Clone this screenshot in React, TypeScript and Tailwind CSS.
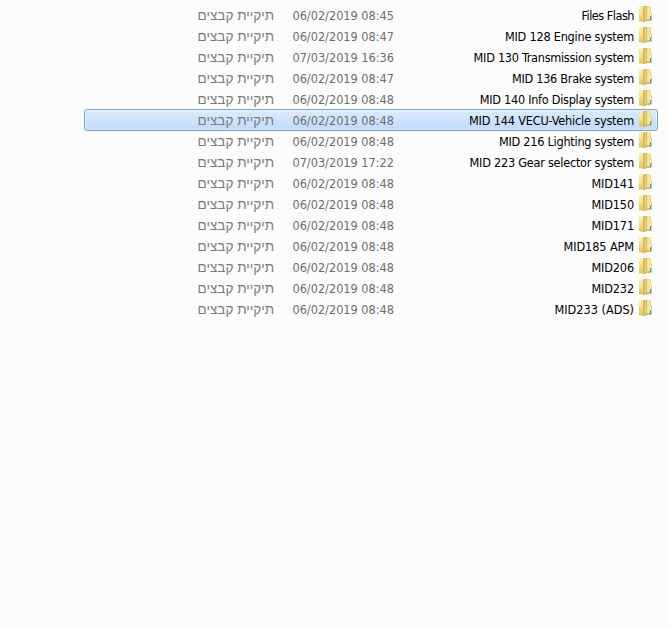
import clsx from 'clsx';

// tracking keeps each label at its natural Explorer width
type Folder = { name: string; date: string; tracking?: string };

const FOLDERS: Folder[] = [
  { name: 'Files Flash', date: '06/02/2019 08:45', tracking: 'tracking-[-0.5px]' },
  { name: 'MID 128 Engine system', date: '06/02/2019 08:47', tracking: 'tracking-[-0.24px]' },
  { name: 'MID 130 Transmission system', date: '07/03/2019 16:36', tracking: 'tracking-[-0.29px]' },
  { name: 'MID 136 Brake system', date: '06/02/2019 08:47', tracking: 'tracking-[-0.28px]' },
  { name: 'MID 140 Info Display system', date: '06/02/2019 08:48', tracking: 'tracking-[-0.29px]' },
  { name: 'MID 144 VECU-Vehicle system', date: '06/02/2019 08:48', tracking: 'tracking-[-0.19px]' },
  { name: 'MID 216 Lighting system', date: '06/02/2019 08:48', tracking: 'tracking-[-0.26px]' },
  { name: 'MID 223 Gear selector system', date: '07/03/2019 17:22', tracking: 'tracking-[-0.25px]' },
  { name: 'MID141', date: '06/02/2019 08:48', tracking: 'tracking-[-0.15px]' },
  { name: 'MID150', date: '06/02/2019 08:48', tracking: 'tracking-[-0.15px]' },
  { name: 'MID171', date: '06/02/2019 08:48', tracking: 'tracking-[-0.15px]' },
  { name: 'MID185 APM', date: '06/02/2019 08:48', tracking: 'tracking-[-0.1px]' },
  { name: 'MID206', date: '06/02/2019 08:48', tracking: 'tracking-[-0.15px]' },
  { name: 'MID232', date: '06/02/2019 08:48', tracking: 'tracking-[-0.15px]' },
  { name: 'MID233 (ADS)', date: '06/02/2019 08:48' },
];

const SELECTED = 5;

function FolderIcon() {
  return (
    <svg width="14" height="18" viewBox="0 0 14 18" className="shrink-0">
      <defs>
        <linearGradient id="folder-front" x1="0" y1="0" x2="0" y2="1">
          <stop offset="0" stopColor="#faf0b8" />
          <stop offset=".5" stopColor="#f2df8c" />
          <stop offset="1" stopColor="#dfc05c" />
        </linearGradient>
        <linearGradient id="folder-back" x1="0" y1="0" x2="0" y2="1">
          <stop offset="0" stopColor="#f3e193" />
          <stop offset="1" stopColor="#d9b956" />
        </linearGradient>
      </defs>
      {/* back cover and its tab */}
      <path d="M7 1h4.5l.5.5V7h.5l.5.5V15l-1 1H7z" fill="url(#folder-back)" />
      <path d="M8 2h3v12H8z" fill="#f5e59c" />
      <path d="M11 8h1v3h-1z" fill="#fffdf0" />
      <path d="M11 11h1v4h-1z" fill="#3f9fe6" />
      <path d="M12 12h1v3h-1z" fill="#a9c7b4" />
      {/* front cover and spine */}
      <path d="M.5 1H5v15.5H.5L0 16V1.5z" fill="url(#folder-front)" />
      <path d="M5 1h3v15l-2 1H4V2z" fill="#d8b957" />
      <path d="M6 2h1v13H6z" fill="#edd883" />
    </svg>
  );
}

function Row({ folder, selected }: { folder: Folder; selected: boolean }) {
  return (
    <div
      className={clsx(
        'flex h-[22px] items-center rounded-[3px] border pr-1 -mb-px whitespace-nowrap',
        selected
          ? 'border-[#7da2ce] bg-linear-to-b from-[#dcebfc] to-[#c1dbfc] shadow-[inset_0_0_0_1px_rgba(255,255,255,0.4)]'
          : 'border-transparent',
      )}
    >
      <div className="pb-0.5">
        <FolderIcon />
      </div>
      <div dir="ltr" className={clsx('mr-[5px] w-[240px] pt-px text-right text-black', folder.tracking)}>
        {folder.name}
      </div>
      <div dir="ltr" className="w-[102px] pt-px text-right text-[#6d6d6d]">{folder.date}</div>
      <div className="mr-[18px] pt-px font-['Liberation_Sans',sans-serif] text-[13.5px] text-[#7a7a7a]">תיקיית קבצים</div>
    </div>
  );
}

export default function App() {
  return (
    <div
      dir="rtl"
      className="h-[627px] w-[669px] overflow-hidden bg-[#fcfcfc] pt-1 pr-[11px] pl-[84px] font-['DejaVu_Sans_Condensed','DejaVu_Sans',sans-serif] text-[12.6px] leading-5"
    >
      {FOLDERS.map((f, i) => (
        <Row key={f.name} folder={f} selected={i === SELECTED} />
      ))}
    </div>
  );
}
